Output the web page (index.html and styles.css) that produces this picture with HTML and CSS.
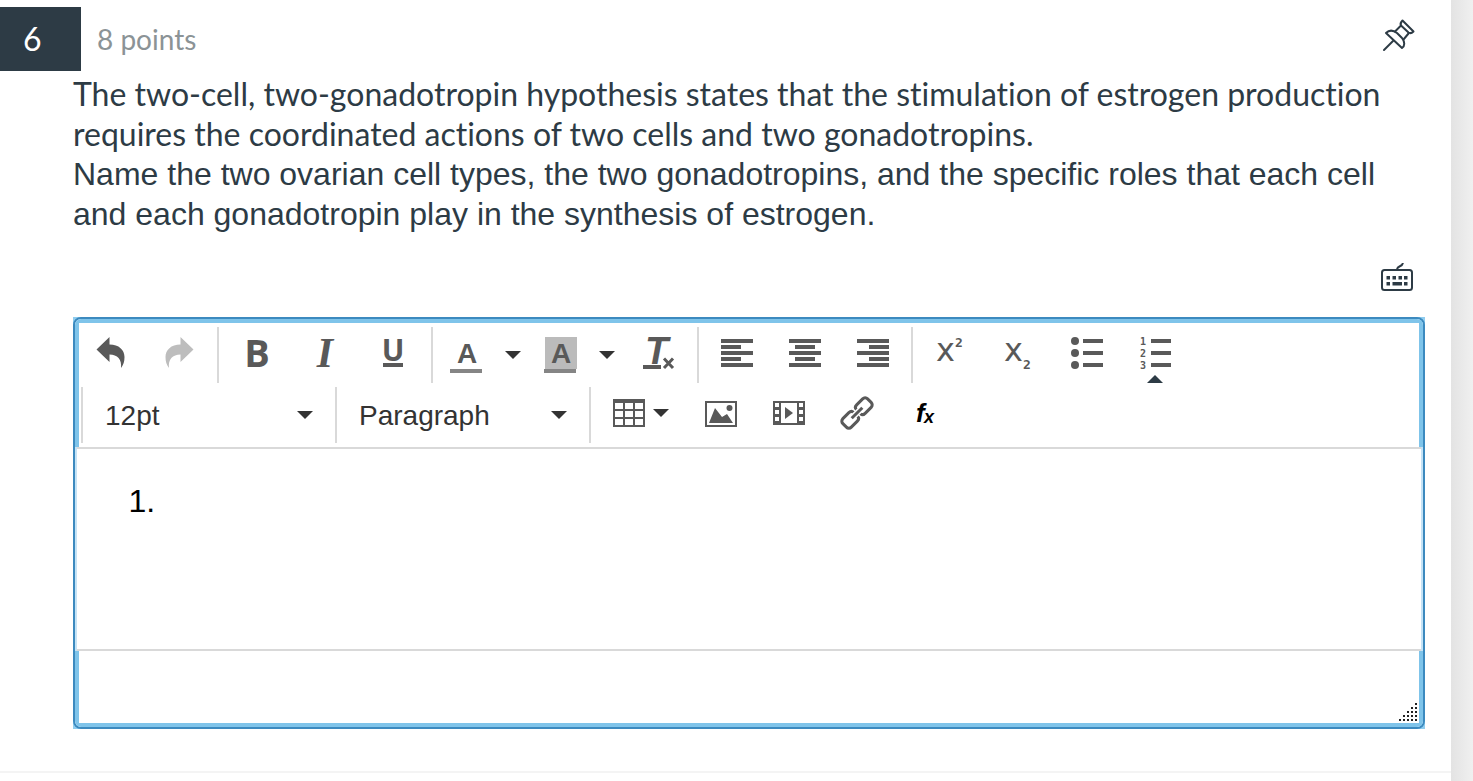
FILE: index.html
```html
<!DOCTYPE html>
<html lang="en">
<head>
  <meta charset="UTF-8" />
  <meta name="viewport" content="width=device-width, initial-scale=1.0" />
  <title>Question 6</title>
  <link rel="stylesheet" href="styles.css">
</head>
<body>
  <main class="page">
    <section class="question">
      <!-- Number, points, pin -->
      <header class="question-header">
        <div class="question-number">6</div>
        <div class="question-points">8 points</div>
        <button type="button" class="icon-button pin-button" aria-label="Pin question">
          <svg width="34" height="34" viewBox="0 0 34 34" fill="none" stroke="currentColor" stroke-width="2" stroke-linejoin="round" stroke-linecap="round">
            <path d="M3 32 12 23"/>
            <path d="M5 15C8 12 12 12 16 15L21 20C24 24 24 28 21 30Z"/>
            <path d="M14 13.500 19.500 8M22.500 21.500 27.500 15.500"/>
            <path d="M21.500 2.500 32.500 13.500C30.500 15.500 29 15.500 27.500 14.500L20 7.500C19 6 19.500 4.500 21.500 2.500Z"/>
          </svg>
        </button>
      </header>

      <div class="question-body">
        <div class="question-text">
          <p>The two-cell, two-gonadotropin hypothesis states that the stimulation of estrogen production requires the coordinated actions of two cells and two gonadotropins.</p>
          <p class="prompt">Name the two ovarian cell types, the two gonadotropins, and the specific roles that each cell and each gonadotropin play in the synthesis of estrogen.</p>
        </div>

        <div class="editor-tools">
          <button type="button" class="icon-button" aria-label="Keyboard shortcuts">
            <svg width="32" height="28" viewBox="0 0 32 28">
              <rect x="1" y="7" width="30" height="20" rx="2.500" fill="none" stroke="currentColor" stroke-width="2"/>
              <path d="M16 6C17 2.500 21 4 22 0" fill="none" stroke="currentColor" stroke-width="2"/>
              <path d="M5.500 13h3.500v3.500h-3.500zM11.500 13h3.500v3.500h-3.500zM17.500 13h3.500v3.500h-3.500zM23 13h3.500v3.500h-3.500zM5.500 19h3.500v3.500h-3.500zM11.500 19h9.500v3.500h-9.500zM23 19h3.500v3.500h-3.500z" fill="currentColor"/>
            </svg>
          </button>
        </div>

        <!-- Rich text editor -->
        <div class="editor-frame">
          <div class="editor">
            <div class="toolbar">
              <div class="toolbar-row">
                <div class="group">
                  <button type="button" class="tool" aria-label="Undo">
                    <svg class="icon" viewBox="0 0 32 32"><path d="M1.500 12.500 14.500 0V7.500C24 7.500 29.500 13 29.500 20C29.500 24.500 28.500 27.500 26 31C27 22.500 22.500 17.500 14.500 17.500V25Z"/></svg>
                  </button>
                  <button type="button" class="tool" aria-label="Redo" disabled>
                    <svg class="icon" viewBox="0 0 32 32"><path d="M30.500 12.500 17.500 0V7.500C8 7.500 2.500 13 2.500 20C2.500 24.500 3.500 27.500 6 31C5 22.500 9.500 17.500 17.500 17.500V25Z"/></svg>
                  </button>
                </div>
                <div class="group">
                  <button type="button" class="tool" aria-label="Bold">
                    <svg class="icon" viewBox="0 0 32 32"><text class="glyph-bold" x="16" y="30" text-anchor="middle">B</text></svg>
                  </button>
                  <button type="button" class="tool" aria-label="Italic">
                    <svg class="icon" viewBox="0 0 32 32"><text class="glyph-italic" x="16" y="30" text-anchor="middle">I</text></svg>
                  </button>
                  <button type="button" class="tool" aria-label="Underline">
                    <svg class="icon" viewBox="0 0 32 32"><text class="glyph-underline" x="16" y="24" text-anchor="middle">U</text><path d="M6 26h20v4H6z"/></svg>
                  </button>
                </div>
                <div class="group">
                  <button type="button" class="tool tool-color" aria-label="Text color">
                    <svg class="icon" viewBox="0 0 32 32"><text class="glyph-color" x="17" y="26" text-anchor="middle">A</text><path class="swatch" d="M0 32h32v4H0z"/></svg>
                  </button>
                  <button type="button" class="tool tool-open" aria-label="Text color options"><span class="caret"></span></button>
                  <button type="button" class="tool tool-color" aria-label="Background color">
                    <svg class="icon" viewBox="0 0 32 32"><path class="highlight" d="M1 0h32v32H1z"/><text class="glyph-color" x="17" y="26" text-anchor="middle">A</text><path class="swatch" d="M0 32h32v4H0z"/></svg>
                  </button>
                  <button type="button" class="tool tool-open" aria-label="Background color options"><span class="caret"></span></button>
                  <button type="button" class="tool" aria-label="Clear formatting">
                    <svg class="icon" viewBox="0 0 32 32"><text class="glyph-clear" x="2" y="27">T</text><path d="M0 28h18v4H0z"/><path class="line" d="M21 21.500 30 31M30 21.500 21 31"/></svg>
                  </button>
                </div>
                <div class="group">
                  <button type="button" class="tool" aria-label="Align left">
                    <svg class="icon" viewBox="0 0 32 32"><path d="M0 2h32v4H0zM0 8h20v4H0zM0 14h32v4H0zM0 20h20v4H0zM0 26h32v4H0z"/></svg>
                  </button>
                  <button type="button" class="tool" aria-label="Align center">
                    <svg class="icon" viewBox="0 0 32 32"><path d="M0 2h32v4H0zM6 8h20v4H6zM0 14h32v4H0zM6 20h20v4H6zM0 26h32v4H0z"/></svg>
                  </button>
                  <button type="button" class="tool" aria-label="Align right">
                    <svg class="icon" viewBox="0 0 32 32"><path d="M0 2h32v4H0zM12 8h20v4H12zM0 14h32v4H0zM12 20h20v4H12zM0 26h32v4H0z"/></svg>
                  </button>
                </div>
                <div class="group">
                  <button type="button" class="tool" aria-label="Superscript">
                    <svg class="icon" viewBox="0 0 32 32"><text class="glyph-x" x="1" y="24">x</text><text class="glyph-script" x="20" y="10">2</text></svg>
                  </button>
                  <button type="button" class="tool" aria-label="Subscript">
                    <svg class="icon" viewBox="0 0 32 32"><text class="glyph-x" x="1" y="24">x</text><text class="glyph-script" x="20" y="32">2</text></svg>
                  </button>
                  <button type="button" class="tool" aria-label="Bullet list">
                    <svg class="icon" viewBox="0 0 32 32"><circle cx="4" cy="4" r="4"/><circle cx="4" cy="16" r="4"/><circle cx="4" cy="28" r="4"/><path d="M12 2h20v4H12zM12 14h20v4H12zM12 26h20v4H12z"/></svg>
                  </button>
                  <button type="button" class="tool tool-active" aria-label="Numbered list" aria-pressed="true">
                    <svg class="icon" viewBox="0 0 32 32"><text class="glyph-small" x="1" y="8">1</text><text class="glyph-small" x="1" y="20">2</text><text class="glyph-small" x="1" y="32">3</text><path d="M12 2h20v4H12zM12 14h20v4H12zM12 26h20v4H12z"/></svg>
                  </button>
                </div>
              </div>

              <div class="toolbar-row toolbar-row-ruled">
                <div class="group">
                  <label class="picker">
                    <select aria-label="Font size">
                      <option>12pt</option>
                    </select>
                    <span class="caret"></span>
                  </label>
                </div>
                <div class="group">
                  <label class="picker">
                    <select aria-label="Block format">
                      <option>Paragraph</option>
                    </select>
                    <span class="caret"></span>
                  </label>
                </div>
                <div class="group">
                  <button type="button" class="tool tool-menu" aria-label="Table">
                    <svg class="icon" viewBox="0 0 32 32"><path d="M0 2h32v28H0zM2 6v6h8V6zM12 6v6h8V6zM22 6v6h8V6zM2 14v6h8v-6zM12 14v6h8v-6zM22 14v6h8v-6zM2 22v6h8v-6zM12 22v6h8v-6zM22 22v6h8v-6z" fill-rule="evenodd"/></svg>
                    <span class="caret"></span>
                  </button>
                  <button type="button" class="tool" aria-label="Insert image">
                    <svg class="icon" viewBox="0 0 32 32"><path d="M0 4h32v26H0zM2 6v22h28V6z" fill-rule="evenodd"/><path d="M4 26 10 11 17 20 22 17 28 26Z"/><circle cx="24.500" cy="11" r="3"/></svg>
                  </button>
                  <button type="button" class="tool" aria-label="Insert video">
                    <svg class="icon" viewBox="0 0 32 32"><path d="M0 4h32v24H0zM8 6v20h16V6zM2 6v4h4V6zM2 13v4h4v-4zM2 20v4h4v-4zM26 6v4h4V6zM26 13v4h4v-4zM26 20v4h4v-4z" fill-rule="evenodd"/><path d="M12 10v12l8-6z"/></svg>
                  </button>
                  <button type="button" class="tool" aria-label="Insert link">
                    <svg class="icon" viewBox="0 0 32 32">
                      <g class="line" transform="rotate(-45 16 16)">
                        <path d="M14 19.500V19C14 21 12.500 22 10.500 22H2C0 22-1.500 20.500-1.500 18.500V13.500C-1.500 11.500 0 10 2 10H10.500C12.500 10 14 11 14 13"/>
                        <path d="M18 13C18 11 19.500 10 21.500 10H30C32 10 33.500 11.500 33.500 13.500V18.500C33.500 20.500 32 22 30 22H21.500C19.500 22 18 21 18 19"/>
                        <path d="M8.500 16H23.500"/>
                      </g>
                    </svg>
                  </button>
                  <button type="button" class="tool" aria-label="Insert math equation">
                    <svg class="icon icon-math" viewBox="0 0 32 32"><text class="glyph-f" x="7" y="25">f</text><text class="glyph-fx" x="15" y="26">x</text></svg>
                  </button>
                </div>
              </div>
            </div>

            <div class="editor-content" contenteditable="true" role="textbox" aria-multiline="true" aria-label="Answer">
              <ol>
                <li></li>
              </ol>
            </div>

            <div class="statusbar">
              <svg class="resize-handle" width="18" height="18" viewBox="0 0 18 18">
                <path d="M16 0h2v2h-2zM12 4h2v2h-2zM16 4h2v2h-2zM8 8h2v2h-2zM12 8h2v2h-2zM16 8h2v2h-2zM4 12h2v2h-2zM8 12h2v2h-2zM12 12h2v2h-2zM16 12h2v2h-2zM0 16h2v2h-2zM4 16h2v2h-2zM8 16h2v2h-2zM12 16h2v2h-2zM16 16h2v2h-2z"/>
              </svg>
            </div>
          </div>
        </div>
      </div>
    </section>
  </main>
</body>
</html>
```

FILE: styles.css
```css
* {
  box-sizing: border-box;
}

body {
  margin: 0;
  min-height: 100vh;
  padding-right: 22px;
  background: linear-gradient(to left, #f0f0f0, #e3e3e3 22px);
  color: #2d3b45;
  font-family: Lato, sans-serif;
  font-size: 32px;
  line-height: 40px;
  font-variant-ligatures: none;
  text-rendering: optimizeLegibility;
}

p {
  margin: 0;
}

button,
select {
  margin: 0;
  padding: 0;
  border: 0;
  background: none;
  color: inherit;
  font: inherit;
}

svg {
  display: block;
}

.page {
  min-height: 100vh;
  background: #fff;
}

.question {
  padding-top: 7px;
  border-bottom: 2px solid #f4f4f4;
}

/* Header */
.question-header {
  display: flex;
  align-items: center;
  padding-right: 36px;
}

.question-number {
  width: 81px;
  padding: 12px 23px;
  background: #2d3b45;
  color: #fff;
}

.question-points {
  flex: 1;
  padding-left: 16px;
  color: #8b9396;
  font-size: 28px;
}

.icon-button {
  cursor: pointer;
}

.pin-button {
  align-self: flex-start;
  padding-top: 11px;
}

/* Body */
.question-body {
  padding: 3px 26px 42px 73px;
}

.prompt {
  font-family: "Liberation Sans", Arial, sans-serif;
}

.editor-tools {
  display: flex;
  justify-content: flex-end;
  padding: 29px 12px 26px;
}

/* Editor */
.editor-frame {
  background: #90cdef;
}

.editor {
  border: 2px solid #3c8abf;
  border-radius: 8px;
  overflow: hidden;
  background: #fff;
  font-family: "Liberation Sans", Arial, sans-serif;
}

.toolbar {
  display: flex;
  flex-direction: column;
  gap: 4px;
  padding: 8px 2px 4px;
  box-shadow: inset 4px 4px #7fc4ea, inset -4px 0 #7fc4ea;
}

.toolbar-row {
  display: flex;
  flex-wrap: wrap;
}

.toolbar-row-ruled {
  padding-left: 4px;
}

.group {
  display: flex;
  height: 56px;
  padding-right: 4px;
}

.group + .group,
.toolbar-row-ruled .group {
  padding-left: 4px;
  border-left: 2px solid #d9d9d9;
}

.tool {
  display: flex;
  align-items: center;
  justify-content: center;
  position: relative;
  width: 68px;
  padding-bottom: 4px;
  color: #595959;
  cursor: pointer;
}

.tool:disabled {
  color: #bdbdbd;
}

.tool-color {
  width: 58px;
}

.tool-open {
  width: 36px;
  padding: 0;
}

.tool-menu {
  gap: 8px;
  width: 92px;
}

.tool-active::after {
  content: "";
  position: absolute;
  bottom: 0;
  left: 50%;
  margin-left: -8px;
  border: 8px solid transparent;
  border-top: 0;
  border-bottom-color: #2d3b45;
}

.caret {
  border: 8px solid transparent;
  border-top-color: #333;
  border-bottom: 0;
}

/* Drop-downs */
.picker {
  position: relative;
  width: 244px;
}

.picker select {
  width: 100%;
  height: 100%;
  padding: 2px 0 0 18px;
  appearance: none;
  color: #333;
  font-size: 28px;
}

.picker .caret {
  position: absolute;
  top: 24px;
  right: 18px;
  pointer-events: none;
}

/* Toolbar icons */
.icon {
  width: 32px;
  height: 32px;
  overflow: visible;
  fill: currentColor;
}

.icon-math {
  color: #000;
}

.line {
  fill: none;
  stroke: currentColor;
  stroke-width: 3px;
}

.swatch {
  fill: #858585;
}

.highlight {
  fill: #bbb;
}

.glyph-bold {
  font: bold 38px "Open Sans", sans-serif;
}

.glyph-italic {
  font: italic bold 42px "Liberation Serif", serif;
}

.glyph-underline {
  font: bold 30px "Open Sans", sans-serif;
}

.glyph-color {
  font: bold 28px "Liberation Sans", sans-serif;
}

.glyph-clear {
  font: italic bold 38px "Liberation Sans", sans-serif;
}

.glyph-x {
  font: 32px "DejaVu Sans", sans-serif;
}

.glyph-script {
  font: bold 13px "DejaVu Sans Mono", monospace;
}

.glyph-small {
  font: bold 10px "DejaVu Sans Mono", monospace;
}

.glyph-f {
  font: italic bold 26px "Liberation Sans", sans-serif;
}

.glyph-fx {
  font: italic bold 18px "Liberation Sans", sans-serif;
}

/* Writing area */
.editor-content {
  min-height: 204px;
  padding: 34px 16px;
  border: solid #c5e3f6;
  border-width: 0 2px;
  box-shadow: inset 0 2px #d9d9d9, inset 0 -2px #d9d9d9;
  color: #000;
  outline: none;
}

.editor-content ol {
  margin: 0;
  padding-left: 71px;
}

.statusbar {
  display: flex;
  align-items: flex-end;
  justify-content: flex-end;
  height: 76px;
  padding: 6px;
  box-shadow: inset 4px -4px #7fc4ea, inset -4px 0 #7fc4ea;
}

.resize-handle {
  fill: #222;
}
```
